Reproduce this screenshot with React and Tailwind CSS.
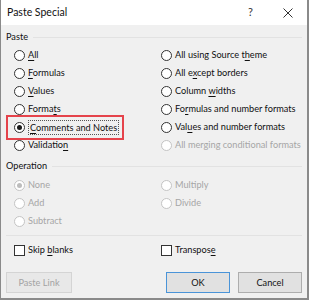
import React from 'react';

const font = { fontFamily: 'Lato, "Noto Sans", "Liberation Sans", sans-serif' };

const pasteLeft = [
  { pre: '', key: 'A', post: 'll' },
  { pre: '', key: 'F', post: 'ormulas' },
  { pre: '', key: 'V', post: 'alues' },
  { pre: 'Forma', key: 't', post: 's' },
  { pre: '', key: 'C', post: 'omments and Notes', checked: true, focus: true },
  { pre: 'Validatio', key: 'n', post: '' },
];

const pasteRight = [
  { pre: 'All using Source t', key: 'h', post: 'eme' },
  { pre: 'All e', key: 'x', post: 'cept borders' },
  { pre: 'Column ', key: 'w', post: 'idths' },
  { pre: 'Fo', key: 'r', post: 'mulas and number formats' },
  { pre: 'Val', key: 'u', post: 'es and number formats' },
  { pre: 'All merging conditional formats', key: '', post: '', disabled: true },
];

const Radio = ({ checked, disabled }) => (
  <span
    className={`flex h-[11px] w-[11px] shrink-0 items-center justify-center rounded-full border bg-white ${
      disabled ? 'border-[#c4c4c4]' : 'border-[#333333]'
    }`}
  >
    {checked && (
      <span className={`h-[5px] w-[5px] rounded-full ${disabled ? 'bg-[#bdbdbd]' : 'bg-[#1a1a1a]'}`} />
    )}
  </span>
);

const Label = ({ item }) => (
  <span>
    {item.pre}
    {item.key && <span className="underline underline-offset-2">{item.key}</span>}
    {item.post}
  </span>
);

const RadioRow = ({ item }) => (
  <div
    className={`relative flex h-[18px] items-center gap-[3px] whitespace-nowrap ${
      item.disabled ? 'text-[#a6a6a6]' : 'text-[#111111]'
    }`}
  >
    <Radio checked={item.checked} disabled={item.disabled} />
    {item.focus ? (
      <span className="border border-dotted border-[#555555] px-px leading-[13px]">
        <Label item={item} />
      </span>
    ) : (
      <Label item={item} />
    )}
    {item.focus && (
      <span className="absolute -left-[8px] -top-[3px] h-[25px] w-[118px] border-2 border-[#e5434b]" />
    )}
  </div>
);

const GroupHeader = ({ children, className }) => (
  <div className={`flex h-[16px] items-center text-[#111111] ${className}`}>
    <span>{children}</span>
    <span className="ml-[5px] h-px flex-1 bg-[#e2e2e2]" />
  </div>
);

const Checkbox = ({ pre, keyChar, post }) => (
  <div className="flex h-[18px] items-center gap-[3px] whitespace-nowrap text-[#111111]">
    <span className="h-[11px] w-[11px] shrink-0 border border-[#333333] bg-white" />
    <span>
      {pre}
      <span className="underline underline-offset-2">{keyChar}</span>
      {post}
    </span>
  </div>
);

export default function App() {
  return (
    <div
      className="flex h-[300px] w-[309px] flex-col border-b-2 border-l border-r-2 border-[#8a8a8a] bg-[#f0f0f0] text-[9.2px]"
      style={font}
    >
      {/* Title bar */}
      <div className="flex h-[25px] shrink-0 items-center bg-white pl-[6px] pr-[14px] text-[10.5px] text-[#111111]">
        <span className="flex-1">Paste Special</span>
        <span className="mr-[30px] text-[11px] text-[#333333]">?</span>
        <svg width="10" height="10" viewBox="0 0 10 10" className="text-[#333333]">
          <path d="M0.5 0.5 L9.5 9.5 M9.5 0.5 L0.5 9.5" stroke="currentColor" strokeWidth="1" />
        </svg>
      </div>

      {/* Body */}
      <div className="flex flex-1 flex-col px-[5px]">
        <GroupHeader className="mt-[4px]">Paste</GroupHeader>
        <div className="mt-[1px] grid grid-cols-[147px_1fr] pl-[8px]">
          <div className="flex flex-col">
            {pasteLeft.map((item) => (
              <RadioRow key={item.key + item.pre} item={item} />
            ))}
          </div>
          <div className="flex flex-col">
            {pasteRight.map((item) => (
              <RadioRow key={item.pre} item={item} />
            ))}
          </div>
        </div>

        <GroupHeader className="mt-[4px]">Operation</GroupHeader>
        <div className="mt-[2px] grid grid-cols-[147px_1fr] pl-[8px]">
          <div className="flex flex-col">
            <RadioRow item={{ pre: 'None', key: '', post: '', checked: true, disabled: true }} />
            <RadioRow item={{ pre: 'Add', key: '', post: '', disabled: true }} />
            <RadioRow item={{ pre: 'Subtract', key: '', post: '', disabled: true }} />
          </div>
          <div className="flex flex-col">
            <RadioRow item={{ pre: 'Multiply', key: '', post: '', disabled: true }} />
            <RadioRow item={{ pre: 'Divide', key: '', post: '', disabled: true }} />
          </div>
        </div>

        <div className="mt-[5px] h-px bg-[#e2e2e2]" />

        <div className="mt-[5px] grid grid-cols-[147px_1fr] pl-[8px]">
          <Checkbox pre="Skip " keyChar="b" post="lanks" />
          <Checkbox pre="Transpos" keyChar="e" post="" />
        </div>

        <div className="mt-[13px] flex items-center">
          <button className="h-[21px] w-[66px] border border-[#d4d4d4] bg-[#e8e8e8] text-[#a3a3a3]">
            Paste Link
          </button>
          <button className="ml-auto h-[21px] w-[64px] border border-[#4a94d8] bg-[#e1e1e1] text-[#111111]">
            OK
          </button>
          <button className="ml-[8px] h-[21px] w-[64px] border border-[#adadad] bg-[#e1e1e1] text-[#111111]">
            Cancel
          </button>
        </div>
      </div>
    </div>
  );
}
